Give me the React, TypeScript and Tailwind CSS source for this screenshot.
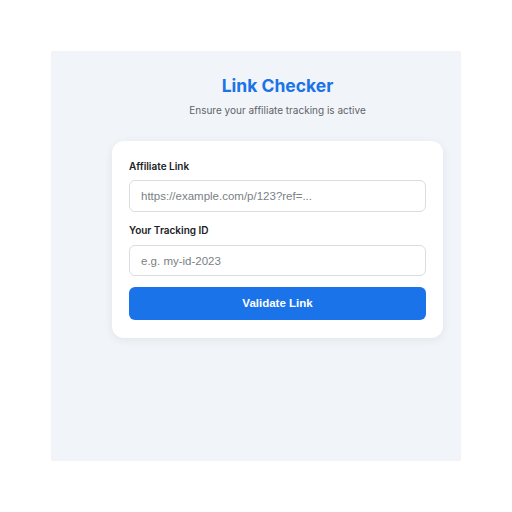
export default function App() {
  return (
    <div className="h-screen w-full bg-white p-[51px] font-['Inter',sans-serif]">
      <main className="h-full w-full bg-[#f1f5f9] flex flex-col items-center pt-[23px] pl-[43px]">
        <h1 className="text-[17.5px] leading-[24px] font-bold text-[#1a73e8]">Link Checker</h1>
        <p className="mt-[5px] text-[10px] leading-[15px] text-[#5f6368]">Ensure your affiliate tracking is active</p>

        <section className="mt-[23px] w-[331px] bg-white rounded-[12px] shadow-[0_2px_10px_rgba(15,23,42,0.07)] px-[17px] pt-[18px] pb-[18px]">
          <label className="block text-[10px] font-semibold text-[#202124]">Affiliate Link</label>
          <input
            type="text"
            placeholder="https://example.com/p/123?ref=..."
            className="mt-[6px] w-full h-[32px] px-[11px] rounded-[6px] border border-[#dadce0] bg-white text-[11.5px] font-['Liberation_Sans',sans-serif] placeholder:text-[#7a7f85] outline-none"
          />

          <label className="block mt-[11px] text-[10px] font-semibold text-[#202124]">Your Tracking ID</label>
          <input
            type="text"
            placeholder="e.g. my-id-2023"
            className="mt-[7px] w-full h-[31px] px-[11px] rounded-[6px] border border-[#dadce0] bg-white text-[11.5px] font-['Liberation_Sans',sans-serif] placeholder:text-[#7a7f85] outline-none"
          />

          <button className="mt-[11px] w-full h-[33px] rounded-[6px] bg-[#1a73e8] text-white text-[11.5px] font-bold font-['Liberation_Sans',sans-serif]">
            Validate Link
          </button>
        </section>
      </main>
    </div>
  );
}
